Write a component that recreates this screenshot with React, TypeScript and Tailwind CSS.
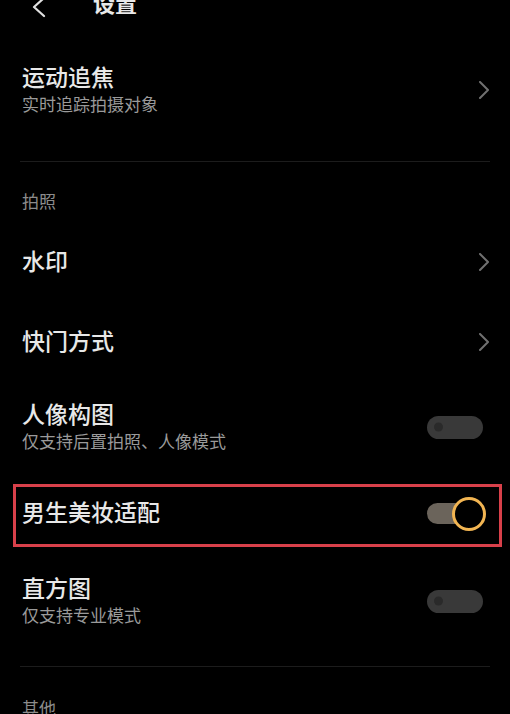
import React from "react"

const font = { fontFamily: '"Noto Sans CJK SC", "Noto Sans", sans-serif' }

function Chevron() {
  return (
    <svg width="12" height="18" viewBox="0 0 12 18" fill="none" className="shrink-0">
      <polyline points="2,1 10,9 2,17" stroke="#707070" strokeWidth="2" strokeLinecap="round" strokeLinejoin="round" />
    </svg>
  )
}

function ToggleOff() {
  return (
    <div className="relative w-[56px] h-[23px] rounded-full bg-[#393939] shrink-0 mr-[7px]">
      <div className="absolute left-[7px] top-1/2 -translate-y-1/2 w-[9px] h-[9px] rounded-full bg-[#2a2a2a]" />
    </div>
  )
}

function ToggleOn() {
  return (
    <div className="relative w-[56px] h-[21px] rounded-full bg-[#6b645b] shrink-0 mr-[16px]">
      <div className="absolute right-[-3px] top-1/2 -translate-y-1/2 w-[34px] h-[34px] rounded-full border-[3px] border-[#f2b552] bg-black" />
    </div>
  )
}

type RowProps = {
  title: string
  sub?: string
  right: React.ReactNode
  className: string
}

function Row({ title, sub, right, className }: RowProps) {
  return (
    <div className={`flex items-center justify-between pl-[22px] pr-[20px] ${className}`}>
      <div className="flex flex-col gap-[2px] mb-[5px]">
        <div className="text-[23px] leading-[30px] font-medium text-[#e8e8e8]">{title}</div>
        {sub && <div className="text-[17px] leading-[22px] text-[#9a9a9a]">{sub}</div>}
      </div>
      {right}
    </div>
  )
}

export default function App() {
  return (
    <div className="w-[510px] h-[714px] bg-black overflow-hidden" style={font}>
      {/* header, cut off at the top */}
      <div className="h-[4px] flex items-center">
        <svg width="16" height="22" viewBox="0 0 16 22" fill="none" className="ml-[31px] translate-y-[6px]">
          <polyline points="13,1 3,10 13,19" stroke="#e0e0e0" strokeWidth="2.2" strokeLinecap="round" strokeLinejoin="round" />
        </svg>
        <div className="ml-[46px] text-[22px] leading-[22px] font-bold text-[#e8e8e8]">设置</div>
      </div>

      <Row className="mt-[36px] h-[100px]" title="运动追焦" sub="实时追踪拍摄对象" right={<Chevron />} />

      <div className="mt-[21px] mx-[20px] h-px bg-[#1c1c1c]" />

      <div className="mt-[28px] pl-[22px] h-[22px] text-[17px] leading-[22px] text-[#8c8c8c]">拍照</div>

      <Row className="mt-[10px] h-[80px]" title="水印" right={<Chevron />} />
      <Row className="h-[80px]" title="快门方式" right={<Chevron />} />
      <Row className="h-[90px]" title="人像构图" sub="仅支持后置拍照、人像模式" right={<ToggleOff />} />

      <div className="mt-[12px] ml-[13px] mr-[8px] h-[63px] border-[3px] border-[#d8404a] flex items-center justify-between pl-[6px] pb-[4px]">
        <div className="text-[23px] leading-[30px] font-medium text-[#e8e8e8] mb-[5px]">男生美妆适配</div>
        <ToggleOn />
      </div>

      <Row className="h-[108px]" title="直方图" sub="仅支持专业模式" right={<ToggleOff />} />

      <div className="mt-[11px] mx-[20px] h-px bg-[#1c1c1c]" />

      <div className="mt-[30px] pl-[22px] h-[22px] text-[17px] leading-[22px] text-[#8c8c8c]">其他</div>
    </div>
  )
}
